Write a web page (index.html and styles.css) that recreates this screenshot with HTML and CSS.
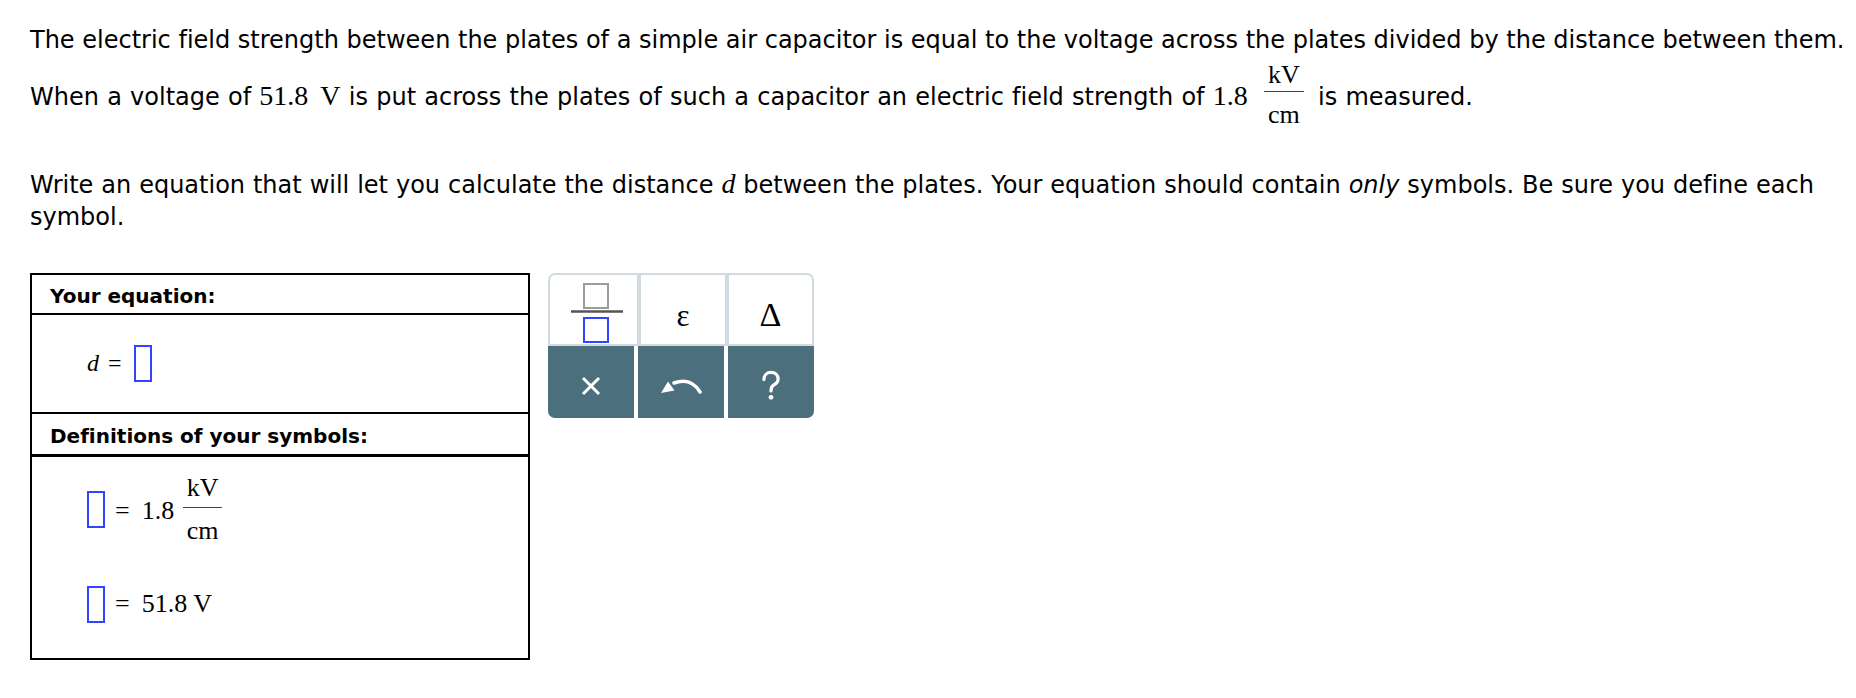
FILE: index.html
```html
<!DOCTYPE html>
<html>
<head>
<meta charset="utf-8">
<title>Capacitor question</title>
<link rel="stylesheet" href="styles.css">
</head>
<body>
<div class="page">
  <p class="q q1">The electric field strength between the plates of a simple air capacitor is equal to the voltage across the plates divided by the distance between them.</p>
  <p class="q q2">When a voltage of <span class="m">51.8<span class="unit">V</span></span> is put across the plates of such a capacitor an electric field strength of <span class="m">1.8</span> <span class="frac"><span class="num">kV</span><span class="den">cm</span></span> is measured.</p>
  <p class="q q3">Write an equation that will let you calculate the distance <span class="m mi">d</span> between the plates. Your equation should contain <em>only</em> symbols. Be sure you define each <span class="last">symbol.</span></p>

  <div class="work">
    <div class="answer">
      <div class="ahead">Your equation:</div>
      <div class="eqrow">
        <span class="mx mi">d</span><span class="mx eq">=</span><span class="slot"></span>
      </div>
      <div class="ahead dhead">Definitions of your symbols:</div>
      <div class="defs">
        <div class="defrow r1">
          <span class="slot"></span>
          <span class="md"><span class="eq">=</span>1.8 <span class="frac dfrac"><span class="num">kV</span><span class="den">cm</span></span></span>
        </div>
        <div class="defrow r2">
          <span class="slot"></span>
          <span class="md"><span class="eq">=</span>51.8 V</span>
        </div>
      </div>
    </div>

    <div class="keypad">
      <div class="krow ktop">
        <div class="key kfrac">
          <svg width="54" height="60" viewBox="0 0 54 60">
            <rect x="15" y="1" width="24" height="24" fill="none" stroke="#9c9c9c" stroke-width="2"/>
            <line x1="2" y1="28.5" x2="54" y2="28.5" stroke="#555" stroke-width="2.5"/>
            <rect x="15" y="35" width="24" height="24" fill="none" stroke="#3344ff" stroke-width="2"/>
          </svg>
        </div>
        <div class="key ksym keps">ε</div>
        <div class="key ksym kdel">Δ</div>
      </div>
      <div class="krow kbot">
        <div class="act">
          <svg width="20" height="20" viewBox="0 0 20 20">
            <line x1="2" y1="2" x2="18" y2="18" stroke="#fff" stroke-width="3"/>
            <line x1="18" y1="2" x2="2" y2="18" stroke="#fff" stroke-width="3"/>
          </svg>
        </div>
        <div class="act">
          <svg width="44" height="20" viewBox="0 0 44 20">
            <path d="M41 16 Q32 1 15 7" fill="none" stroke="#fff" stroke-width="3.5" stroke-linecap="round"/>
            <polygon points="2,17 9,5.5 15.5,14.5" fill="#fff"/>
          </svg>
        </div>
        <div class="act">
          <svg width="24" height="31" viewBox="0 0 22 28">
            <path d="M4.5 8.5 C4.5 4.5 7.5 2 11 2 C14.8 2 17.5 4.5 17.5 8 C17.5 11 15.5 12.5 13.5 13.5 C11.5 14.5 11 16 11 19" fill="none" stroke="#fff" stroke-width="3" stroke-linecap="round"/>
            <circle cx="11" cy="24.8" r="2.2" fill="#fff"/>
          </svg>
        </div>
      </div>
    </div>
  </div>
</div>
</body>
</html>
```

FILE: styles.css
```css
* {
  box-sizing: border-box;
}

body {
  margin: 0;
  background: #ffffff;
  color: #000000;
  font-family: "DejaVu Sans", Verdana, sans-serif;
  font-variant-ligatures: none;
}

.page {
  width: 1856px;
  padding: 24px 0 0 30px;
}

.q {
  margin: 0;
  font-size: 24px;
  line-height: 32px;
  width: 1826px;
}

.q2 {
  margin-top: 6px;
  word-spacing: 0.6px;
}

.q3 {
  margin-top: 39.5px;
  word-spacing: 0.3px;
}

.m {
  font-family: "Liberation Serif", "Times New Roman", serif;
  font-size: 28px;
  word-spacing: 0;
}

.mi {
  font-style: italic;
}

.unit {
  margin-left: 12px;
}

.frac {
  display: inline-flex;
  flex-direction: column;
  vertical-align: 21.5px;
  font-family: "Liberation Serif", "Times New Roman", serif;
  font-size: 26px;
  margin: 0 6px 0 8px;
}

.num {
  line-height: 26px;
  padding: 0 4px 3px;
  border-bottom: 1.5px solid #444;
  text-align: center;
}

.den {
  line-height: 26px;
  padding-top: 10px;
  text-align: center;
}

/* work area */
.work {
  display: flex;
  align-items: flex-start;
  gap: 18px;
  margin-top: 40px;
}

.answer {
  width: 500px;
  border: 2px solid #000;
}

.ahead {
  height: 40px;
  padding: 6px 0 0 18px;
  font-size: 20px;
  font-weight: bold;
  line-height: 31px;
  border-bottom: 2px solid #000;
}

.dhead {
  height: 43px;
  padding-top: 7px;
  border-bottom: 3px solid #000;
}

.eqrow {
  height: 99px;
  display: flex;
  align-items: center;
  padding-left: 55px;
  border-bottom: 2px solid #000;
}

.mx {
  font-family: "Liberation Serif", "Times New Roman", serif;
  font-size: 24px;
}

.eq {
  margin: 0 12px 0 9px;
}

.slot {
  display: inline-block;
  width: 18px;
  height: 37px;
  border: 2px solid #3344ff;
}

.defs {
  height: 201px;
}

.defrow {
  display: flex;
  align-items: center;
  padding-left: 55px;
}

.md {
  font-family: "Liberation Serif", "Times New Roman", serif;
  font-size: 26px;
}

.defrow .eq {
  margin: 0 12px 0 10px;
}

.r1 {
  height: 106px;
}

.r2 {
  height: 83px;
}

.dfrac {
  vertical-align: 23px;
  margin-left: 2px;
}

.dfrac .num {
  padding-bottom: 6px;
}

/* keypad */
.keypad {
  width: 266px;
}

.krow {
  display: flex;
}

.key {
  flex: 1;
  height: 73px;
  background: #fff;
  border: 2px solid #d2dce0;
  display: flex;
  justify-content: center;
}

.ktop .key:first-child {
  border-top-left-radius: 7px;
}

.ktop .key:last-child {
  border-top-right-radius: 7px;
}

.kfrac {
  align-items: flex-end;
  padding-bottom: 1px;
  padding-left: 4px;
}

.ksym {
  align-items: center;
  padding-top: 14px;
  font-family: "Liberation Serif", "Times New Roman", serif;
  font-size: 31px;
}

.kdel {
  font-size: 34px;
  padding-top: 12px;
}

.kbot {
  gap: 4px;
}

.act {
  flex: 1;
  height: 72px;
  background: #4b6f7c;
  display: flex;
  align-items: center;
  justify-content: center;
  padding-top: 8px;
}

.kbot .act:first-child {
  border-bottom-left-radius: 7px;
}

.kbot .act:last-child {
  border-bottom-right-radius: 7px;
}
```
